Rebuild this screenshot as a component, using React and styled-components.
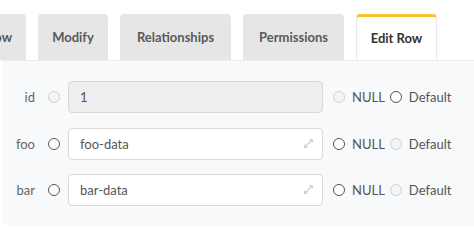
import React from "react";
import styled, { createGlobalStyle } from "styled-components";

const GlobalStyle = createGlobalStyle`
  html, body {
    margin: 0;
    padding: 0;
    background: #fff;
    font-family: Lato, "Open Sans", sans-serif;
  }
`;

const tabs = [
  { name: "Insert Row", width: 90 },
  { name: "Modify", width: 70 },
  { name: "Relationships", width: 111 },
  { name: "Permissions", width: 101 },
  { name: "Edit Row", width: 81, active: true }
];

const rows = [
  { label: "id", value: "1", disabled: true, nullOff: true, defOff: false },
  { label: "foo", value: "foo-data", nullOff: false, defOff: true },
  { label: "bar", value: "bar-data", nullOff: false, defOff: true }
];

const ExpandIcon = () => (
  <svg width="11" height="11" viewBox="0 0 11 11">
    <line x1="2.5" y1="8.5" x2="8.5" y2="2.5" stroke="#cfcfcf" strokeWidth="1.2" />
    <polygon points="10,1 10,5 6,1" fill="#cfcfcf" />
    <polygon points="1,10 1,6 5,10" fill="#cfcfcf" />
  </svg>
);

const App = () => {
  return (
    <Page>
      <GlobalStyle />
      <TabBar>
        {tabs.map(t => (
          <Tab key={t.name} active={t.active} w={t.width}>
            {t.name}
          </Tab>
        ))}
      </TabBar>
      <Panel>
        {rows.map(r => (
          <Row key={r.label}>
            <Label>{r.label}</Label>
            <Radio off={r.disabled} />
            <InputWrap>
              <Input disabled={r.disabled}>{r.value}</Input>
              {!r.disabled ? (
                <Expand>
                  <ExpandIcon />
                </Expand>
              ) : null}
            </InputWrap>
            <Option>
              <Radio off={r.nullOff} />
              NULL
            </Option>
            <Option>
              <Radio off={r.defOff} />
              Default
            </Option>
          </Row>
        ))}
      </Panel>
    </Page>
  );
};

export default App;

const Page = styled.div`
  width: 474px;
  height: 228px;
  overflow: hidden;
`;

const TabBar = styled.div`
  display: flex;
  justify-content: flex-end;
  gap: 12px;
  padding: 14px 37px 0 0;
  overflow: hidden;
  height: 46px;
`;

const Tab = styled.div`
  flex-shrink: 0;
  box-sizing: border-box;
  width: ${props => props.w}px;
  height: 46px;
  padding-bottom: 1px;
  display: flex;
  align-items: center;
  justify-content: center;
  white-space: nowrap;
  font-size: 13px;
  font-weight: 700;
  border-radius: 4px 4px 0 0;
  color: ${props => (props.active ? "#333" : "#5a5a5a")};
  background: ${props => (props.active ? "#fff" : "#e6e6e6")};
  border: ${props => (props.active ? "1px solid #e8e8e8" : "none")};
  border-top: ${props => (props.active ? "3px solid #f6c433" : "none")};
  border-bottom: none;
`;

const Panel = styled.div`
  margin-left: 2px;
  background: #f8f9fa;
  border-top: 1px solid #eceeef;
  padding: 20px 0 19px;
  display: flex;
  flex-direction: column;
  gap: 14.5px;
`;

const Row = styled.div`
  display: flex;
  align-items: center;
  height: 32px;
`;

const Label = styled.div`
  width: 33px;
  text-align: right;
  font-size: 13px;
  color: #666;
  margin-right: 13px;
`;

const Radio = styled.span`
  display: inline-block;
  box-sizing: border-box;
  width: 12px;
  height: 12px;
  border-radius: 50%;
  border: 1px solid ${props => (props.off ? "#d2d2d2" : "#555")};
  background: ${props => (props.off ? "#f4f4f4" : "#fff")};
  flex-shrink: 0;
`;

const InputWrap = styled.div`
  position: relative;
  margin-left: 8px;
  width: 255px;
  height: 32px;
`;

const Input = styled.div`
  box-sizing: border-box;
  height: 32px;
  width: 100%;
  border: 1px solid #d9d9d9;
  border-radius: 4px;
  background: ${props => (props.disabled ? "#eeeeee" : "#fff")};
  padding-left: 11px;
  display: flex;
  align-items: center;
  font-size: 13px;
  color: #555;
`;

const Expand = styled.span`
  position: absolute;
  right: 9px;
  top: 10px;
  display: flex;
`;

const Option = styled.div`
  display: flex;
  align-items: center;
  gap: 7px;
  font-size: 13px;
  color: #555;
  margin-left: 10px;
  & + & {
    margin-left: 5px;
  }
`;
